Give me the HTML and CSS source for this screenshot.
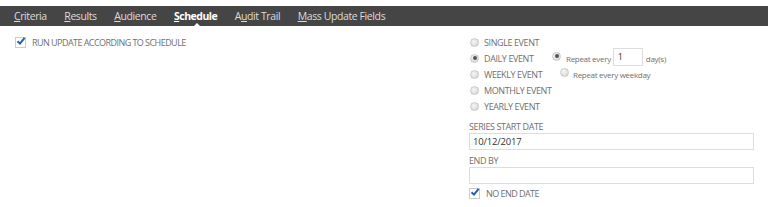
FILE: index.html
```html
<!DOCTYPE html>
<html>
<head>
<meta charset="utf-8">
<link rel="stylesheet" href="styles.css">
</head>
<body>
<nav class="tabs">
  <a class="tab"><u>C</u>riteria</a>
  <a class="tab"><u>R</u>esults</a>
  <a class="tab"><u>A</u>udience</a>
  <a class="tab active"><u>S</u>chedule</a>
  <a class="tab">A<u>u</u>dit Trail</a>
  <a class="tab"><u>M</u>ass Update Fields</a>
</nav>
<div class="content">
  <div class="left">
    <label class="check">
      <span class="box"><svg viewBox="0 0 10 10" width="10" height="10"><path d="M1.5 5.2 L4 7.6 L8.6 1.8" fill="none" stroke="#2a5fa8" stroke-width="2"/></svg></span>
      RUN UPDATE ACCORDING TO SCHEDULE
    </label>
  </div>
  <div class="right">
    <div class="row"><span class="radio"></span><span class="lbl">SINGLE EVENT</span></div>
    <div class="row">
      <span class="radio on"></span><span class="lbl ev">DAILY EVENT</span>
      <span class="radio on sub"></span><span class="small">Repeat every</span><span class="num">1</span><span class="small">day(s)</span>
    </div>
    <div class="row">
      <span class="radio"></span><span class="lbl ev">WEEKLY EVENT</span>
      <span class="radio sub2"></span><span class="small">Repeat every weekday</span>
    </div>
    <div class="row"><span class="radio"></span><span class="lbl">MONTHLY EVENT</span></div>
    <div class="row"><span class="radio"></span><span class="lbl">YEARLY EVENT</span></div>
    <div class="field-label first">SERIES START DATE</div>
    <div class="input">10/12/2017</div>
    <div class="field-label">END BY</div>
    <div class="input"></div>
    <label class="check end">
      <span class="box"><svg viewBox="0 0 10 10" width="10" height="10"><path d="M1.5 5.2 L4 7.6 L8.6 1.8" fill="none" stroke="#2a5fa8" stroke-width="2"/></svg></span>
      NO END DATE
    </label>
  </div>
</div>
</body>
</html>
```

FILE: styles.css
```css
html, body { margin: 0; padding: 0; background: #fff; }
body { font-family: "Open Sans", "Liberation Sans", sans-serif; color: #707070; }
.tabs {
  margin-top: 6px;
  height: 20px;
  background: #454545;
  display: flex;
  align-items: center;
  padding-left: 14px;
  gap: 17.5px;
}
.tab {
  position: relative;
  color: #dcdcdc;
  font-size: 10.5px;
  letter-spacing: -0.4px;
  line-height: 20px;
  white-space: nowrap;
}
.tab u { text-decoration: underline; text-underline-offset: 1px; }
.tab.active { color: #fff; font-weight: bold; letter-spacing: -0.5px; }
.tab.active::after {
  content: "";
  position: absolute;
  left: 50%;
  bottom: 0;
  margin-left: -2px;
  border-left: 3.5px solid transparent;
  border-right: 3.5px solid transparent;
  border-bottom: 3.5px solid #fff;
}
.content { display: flex; }
.left { width: 454px; padding: 10px 0 0 15px; }
.right { width: 285px; padding-top: 8px; }
.check {
  display: flex;
  align-items: center;
  gap: 6px;
  font-size: 9px;
  letter-spacing: -0.55px;
  color: #707070;
}
.box {
  width: 9px; height: 9px;
  border: 1px solid #ccc;
  background: #fff;
  position: relative;
  display: inline-block;
  flex: none;
}
.box svg { position: absolute; left: 0; top: -2px; }
.row { display: flex; align-items: center; height: 16.2px; padding-left: 1px; }
.radio {
  width: 7px; height: 7px;
  border-radius: 50%;
  border: 1px solid #c8c8c8;
  background: radial-gradient(circle at 40% 35%, #f6f6f6, #d4d4d4);
  position: relative;
  margin-right: 5px;
  flex: none;
}
.radio.on::after {
  content: "";
  position: absolute;
  left: 1.5px; top: 1.5px;
  width: 4px; height: 4px;
  border-radius: 50%;
  background: #555;
}
.lbl { font-size: 9px; letter-spacing: -0.4px; }
.ev { width: 68px; }
.sub { position: relative; top: -2px; margin-right: 5px; }
.sub2 { position: relative; top: -2px; margin-left: 8px; margin-right: 4px; }
.small { font-size: 8px; letter-spacing: -0.3px; color: #707070; }
.num {
  width: 24px; height: 16px;
  border: 1px solid #ddd;
  font-size: 9px; color: #333;
  line-height: 16px;
  padding-left: 4px;
  margin: -3px 3px 0 2px;
}
.field-label { font-size: 9px; letter-spacing: -0.4px; margin-top: 5px; height: 12px; line-height: 12px; }
.field-label.first { margin-top: 6px; }
.input {
  height: 15px;
  border: 1px solid #ddd;
  font-size: 9.5px;
  letter-spacing: -0.2px;
  color: #333;
  line-height: 15px;
  padding-left: 3px;
}
.end { margin-top: 3px; }
```
